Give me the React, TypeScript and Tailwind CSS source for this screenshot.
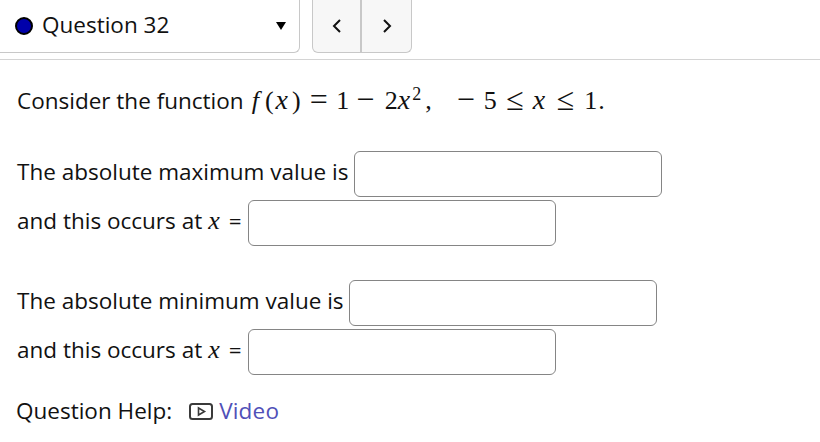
import React from "react";

const sans = "font-['Open_Sans',sans-serif]";
const M = ({ children, className = "" }: { children: React.ReactNode; className?: string }) => (
  <span className={`font-['Liberation_Serif',serif] ${className}`}>{children}</span>
);
const X = () => <M className="italic text-[26px] leading-none">x</M>;
const Op = ({ children, className = "" }: { children: React.ReactNode; className?: string }) => (
  <span className={`text-[32px] leading-none relative top-[1px] ${className}`}>{children}</span>
);

const Box = ({ w }: { w: string }) => (
  <span className={`inline-block h-[46px] ${w} border border-[#858585] rounded-[6px] bg-white shrink-0`} />
);

export default function App() {
  return (
    <div className={`w-[820px] h-[442px] bg-white overflow-hidden text-[22.5px] text-[#111] ${sans}`}>
      <div className="flex items-start h-[53px]">
        <div className="w-[300px] h-[53px] flex items-center pl-[15px] pr-[13px] bg-white border-b border-r border-[#c8c8c8] rounded-br-[6px]">
          <span className="w-[18px] h-[18px] rounded-full bg-[#0000aa] border-2 border-black" />
          <span className="ml-[9px] -mt-[2px] flex-1 text-[#111] leading-none">Question 32</span>
          <span className="w-0 h-0 border-x-[5.5px] border-x-transparent border-t-[8px] border-t-black" />
        </div>
        <div className="ml-[12px] w-[100px] h-[53px] flex bg-[#f7f7f7] border-x border-b border-[#c8c8c8] rounded-b-[6px]">
          <div className="w-[49px] h-full flex items-center justify-center border-r-2 border-[#c8c8c8]">
            <svg width="10" height="16" viewBox="0 0 10 16" fill="none" stroke="#111" strokeWidth="2"><path d="M8 2 L2 8 L8 14" /></svg>
          </div>
          <div className="flex-1 flex items-center justify-center">
            <svg width="10" height="16" viewBox="0 0 10 16" fill="none" stroke="#111" strokeWidth="2"><path d="M2 2 L8 8 L2 14" /></svg>
          </div>
        </div>
      </div>
      <div className="mt-[6px] h-px bg-[#d4d4d4]" />

      <div className="pl-[17px]">
        <div className="mt-[19px] h-[40px] flex items-baseline whitespace-pre">
          <span>Consider the function</span>
          <M className="text-[26px] ml-[8px] inline-flex items-baseline">
            <i>f</i>
            <span className="ml-[6px]">(</span>
            <i className="ml-[2px] text-[28px]">x</i>
            <span className="ml-[4px]">)</span>
            <Op className="ml-[9px]">=</Op>
            <span className="ml-[8.5px]">1</span>
            <Op className="ml-[7px]">−</Op>
            <span className="ml-[10.5px]">2</span>
            <i className="text-[28px]">x</i>
            <span className="ml-[2px] text-[18px] relative -top-[9px]">2</span>
            <span className="ml-[4px]">,</span>
            <Op className="ml-[25px]">−</Op>
            <span className="ml-[9px]">5</span>
            <Op className="ml-[9.5px]">≤</Op>
            <i className="ml-[9px] text-[28px]">x</i>
            <Op className="ml-[11.5px]">≤</Op>
            <span className="ml-[10px]">1</span>
            <span className="ml-[1px]">.</span>
          </M>
        </div>

        <div className="mt-[32px] flex items-center h-[46px]">
          <span className="mr-[6px] -mt-[4px]">The absolute maximum value is</span>
          <Box w="w-[308px]" />
        </div>
        <div className="mt-[3px] flex items-center h-[46px]">
          <span className="-mt-[4px]">and this occurs at</span>
          <span className="ml-[6px] -mt-[4px]"><X /></span>
          <span className="ml-[9px] mr-[6px] -mt-[4px]">=</span>
          <Box w="w-[308px]" />
        </div>

        <div className="mt-[34px] flex items-center h-[46px]">
          <span className="mr-[5px] -mt-[4px]">The absolute minimum value is</span>
          <Box w="w-[308px]" />
        </div>
        <div className="mt-[3px] flex items-center h-[46px]">
          <span className="-mt-[4px]">and this occurs at</span>
          <span className="ml-[6px] -mt-[4px]"><X /></span>
          <span className="ml-[9px] mr-[6px] -mt-[4px]">=</span>
          <Box w="w-[308px]" />
        </div>

        <div className="mt-[20px] flex items-center h-[32px] -ml-[1px]">
          <span>Question Help:</span>
          <svg className="ml-[17px]" width="24" height="18" viewBox="0 0 24 18" fill="none">
            <rect x="1" y="2" width="22" height="15" rx="2.5" stroke="#3a3a3a" strokeWidth="2" />
            <path d="M9.5 6 L15.5 9.5 L9.5 13 Z" stroke="#3a3a3a" strokeWidth="1.6" fill="none" />
          </svg>
          <span className="ml-[6px] text-[#5050b8] tracking-[0.2px]">Video</span>
        </div>
      </div>
    </div>
  );
}
